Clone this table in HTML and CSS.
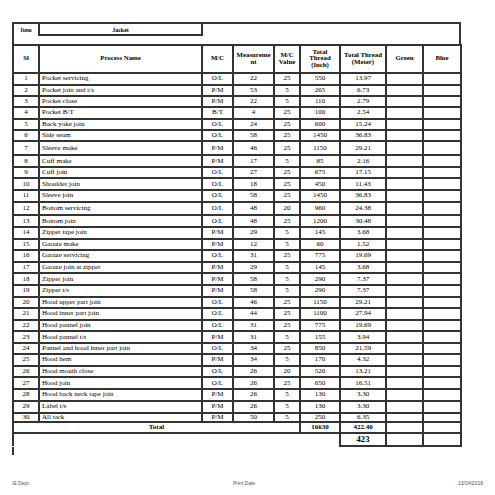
FILE: index.html
```html
<!DOCTYPE html>
<html>
<head>
<meta charset="utf-8">
<link rel="stylesheet" href="styles.css">
</head>
<body>
<div class="sheet">
  <div class="top">
    <div class="item-row">
      <div class="item-label">Item</div>
      <div class="item-value">Jacket</div>
    </div>
  </div>
  <table class="grid">
    <colgroup>
      <col class="c-sl"><col class="c-name"><col class="c-mc"><col class="c-meas"><col class="c-val"><col class="c-inch"><col class="c-meter"><col class="c-green"><col class="c-blue">
    </colgroup>
    <thead>
      <tr class="head">
        <th>Sl</th>
        <th>Process Name</th>
        <th>M/C</th>
        <th>Measureme<br>nt</th>
        <th>M/C<br>Value</th>
        <th>Total<br>Thread<br>(Inch)</th>
        <th>Total Thread<br>(Meter)</th>
        <th>Green</th>
        <th>Blue</th>
      </tr>
    </thead>
    <tbody>
      <tr class="r12"><td>1</td><td class="name">Pocket servicing</td><td>O/L</td><td>22</td><td>25</td><td>550</td><td>13.97</td><td></td><td></td></tr>
      <tr class="r11"><td>2</td><td class="name">Pocket join and t/s</td><td>P/M</td><td>53</td><td>5</td><td>265</td><td>6.73</td><td></td><td></td></tr>
      <tr class="r11"><td>3</td><td class="name">Pocket close</td><td>P/M</td><td>22</td><td>5</td><td>110</td><td>2.79</td><td></td><td></td></tr>
      <tr><td>4</td><td class="name">Pocket B/T</td><td>B/T</td><td>4</td><td>25</td><td>100</td><td>2.54</td><td></td><td></td></tr>
      <tr class="r11"><td>5</td><td class="name">Back yoke join</td><td>O/L</td><td>24</td><td>25</td><td>600</td><td>15.24</td><td></td><td></td></tr>
      <tr class="r11"><td>6</td><td class="name">Side seam</td><td>O/L</td><td>58</td><td>25</td><td>1450</td><td>36.83</td><td></td><td></td></tr>
      <tr class="tall"><td>7</td><td class="name">Sleeve make</td><td>P/M</td><td>46</td><td>25</td><td>1150</td><td>29.21</td><td></td><td></td></tr>
      <tr class="r12"><td>8</td><td class="name">Cuff make</td><td>P/M</td><td>17</td><td>5</td><td>85</td><td>2.16</td><td></td><td></td></tr>
      <tr class="r11"><td>9</td><td class="name">Cuff join</td><td>O/L</td><td>27</td><td>25</td><td>675</td><td>17.15</td><td></td><td></td></tr>
      <tr><td>10</td><td class="name">Shoulder join</td><td>O/L</td><td>18</td><td>25</td><td>450</td><td>11.43</td><td></td><td></td></tr>
      <tr><td>11</td><td class="name">Sleeve join</td><td>O/L</td><td>58</td><td>25</td><td>1450</td><td>36.83</td><td></td><td></td></tr>
      <tr class="tall"><td>12</td><td class="name">Bottom servicing</td><td>O/L</td><td>48</td><td>20</td><td>960</td><td>24.38</td><td></td><td></td></tr>
      <tr><td>13</td><td class="name">Bottom join</td><td>O/L</td><td>48</td><td>25</td><td>1200</td><td>30.48</td><td></td><td></td></tr>
      <tr><td>14</td><td class="name">Zipper tape join</td><td>P/M</td><td>29</td><td>5</td><td>145</td><td>3.68</td><td></td><td></td></tr>
      <tr><td>15</td><td class="name">Garaze make</td><td>P/M</td><td>12</td><td>5</td><td>60</td><td>1.52</td><td></td><td></td></tr>
      <tr><td>16</td><td class="name">Garaze servicing</td><td>O/L</td><td>31</td><td>25</td><td>775</td><td>19.69</td><td></td><td></td></tr>
      <tr><td>17</td><td class="name">Garaze join at zipper</td><td>P/M</td><td>29</td><td>5</td><td>145</td><td>3.68</td><td></td><td></td></tr>
      <tr><td>18</td><td class="name">Zipper join</td><td>P/M</td><td>58</td><td>5</td><td>290</td><td>7.37</td><td></td><td></td></tr>
      <tr><td>19</td><td class="name">Zipper t/s</td><td>P/M</td><td>58</td><td>5</td><td>290</td><td>7.37</td><td></td><td></td></tr>
      <tr><td>20</td><td class="name">Hood upper part join</td><td>O/L</td><td>46</td><td>25</td><td>1150</td><td>29.21</td><td></td><td></td></tr>
      <tr><td>21</td><td class="name">Hood inner part join</td><td>O/L</td><td>44</td><td>25</td><td>1100</td><td>27.94</td><td></td><td></td></tr>
      <tr><td>22</td><td class="name">Hood pannel join</td><td>O/L</td><td>31</td><td>25</td><td>775</td><td>19.69</td><td></td><td></td></tr>
      <tr><td>23</td><td class="name">Hood pannel t/s</td><td>P/M</td><td>31</td><td>5</td><td>155</td><td>3.94</td><td></td><td></td></tr>
      <tr class="r11"><td>24</td><td class="name">Pannel and hood inner part join</td><td>O/L</td><td>34</td><td>25</td><td>850</td><td>21.59</td><td></td><td></td></tr>
      <tr><td>25</td><td class="name">Hood hem</td><td>P/M</td><td>34</td><td>5</td><td>170</td><td>4.32</td><td></td><td></td></tr>
      <tr><td>26</td><td class="name">Hood mouth close</td><td>O/L</td><td>26</td><td>20</td><td>520</td><td>13.21</td><td></td><td></td></tr>
      <tr class="r11"><td>27</td><td class="name">Hood join</td><td>O/L</td><td>26</td><td>25</td><td>650</td><td>16.51</td><td></td><td></td></tr>
      <tr class="r12"><td>28</td><td class="name">Hood back neck tape join</td><td>P/M</td><td>26</td><td>5</td><td>130</td><td>3.30</td><td></td><td></td></tr>
      <tr class="r12"><td>29</td><td class="name">Label t/s</td><td>P/M</td><td>26</td><td>5</td><td>130</td><td>3.30</td><td></td><td></td></tr>
      <tr class="short"><td>30</td><td class="name">All tack</td><td>P/M</td><td>50</td><td>5</td><td>250</td><td>6.35</td><td></td><td></td></tr>
      <tr class="total"><td colspan="5">Total</td><td>16630</td><td>422.40</td><td></td><td></td></tr>
      <tr class="grand"><td colspan="6" class="blank"></td><td class="big">423</td><td></td><td></td></tr>
    </tbody>
  </table>
  <div class="tail"></div>
</div>
<div class="footer">
  <span>IE Dept.</span>
  <span>Print Date</span>
  <span>13/04/2018</span>
</div>
</body>
</html>
```
FILE: styles.css
```css
html, body {
  margin: 0;
  padding: 0;
  background: #fff;
}

.sheet {
  padding: 22px 0 0 12px;
  width: 449px;
  font-family: "Liberation Serif", "Times New Roman", serif;
  color: #000;
}

.top {
  box-sizing: border-box;
  width: 449px;
  height: 22px;
  border: 2px solid #333;
  border-bottom: none;
}

.item-row {
  display: flex;
  height: 12px;
}

.item-label {
  width: 24px;
  border-right: 2px solid #333;
  font-size: 5.5px;
  font-weight: bold;
  text-align: center;
  line-height: 12px;
}

.item-value {
  width: 161px;
  border-right: 2px solid #333;
  border-bottom: 2px solid #333;
  font-size: 6px;
  font-weight: bold;
  text-align: center;
  line-height: 12px;
}

.grid {
  border-collapse: collapse;
  table-layout: fixed;
  width: 449px;
  font-size: 7px;
}

.c-sl { width: 26px; }
.c-name { width: 163px; }
.c-mc { width: 31px; }
.c-meas { width: 41px; }
.c-val { width: 26px; }
.c-inch { width: 40px; }
.c-meter { width: 46px; }
.c-green { width: 37px; }
.c-blue { width: 38px; }

.grid th,
.grid td {
  border: 2px solid #333;
  padding: 0;
  text-align: center;
  vertical-align: middle;
  white-space: nowrap;
  overflow: hidden;
}

.grid td {
  line-height: 7px;
}

.grid .head {
  height: 27.5px;
}

.grid th {
  font-size: 6.8px;
  line-height: 6.8px;
  font-weight: bold;
}

.grid tbody tr {
  height: 11.6px;
}

.grid tbody tr.r11 { height: 11.3px; }
.grid tbody tr.r12 { height: 12px; }
.grid tbody tr.tall { height: 13.8px; }
.grid tbody tr.short { height: 9.4px; }

.grid td.name {
  text-align: left;
  padding-left: 2px;
}

.grid tr.total {
  height: 11.3px;
}

.grid tr.total td {
  font-weight: bold;
}

.grid tr.grand {
  height: 12.4px;
}

.grid td.blank {
  border-top: 2px solid #333;
  border-right: none;
  border-bottom: none;
}

.grid td.big {
  font-size: 8.6px;
  font-weight: bold;
}

.tail {
  width: 0;
  height: 8px;
  border-left: 2px solid #333;
}

.footer {
  display: flex;
  justify-content: space-between;
  padding: 25px 12px 0 12px;
  font-family: "Liberation Sans", Arial, sans-serif;
  font-size: 5px;
  color: #555;
}
```
